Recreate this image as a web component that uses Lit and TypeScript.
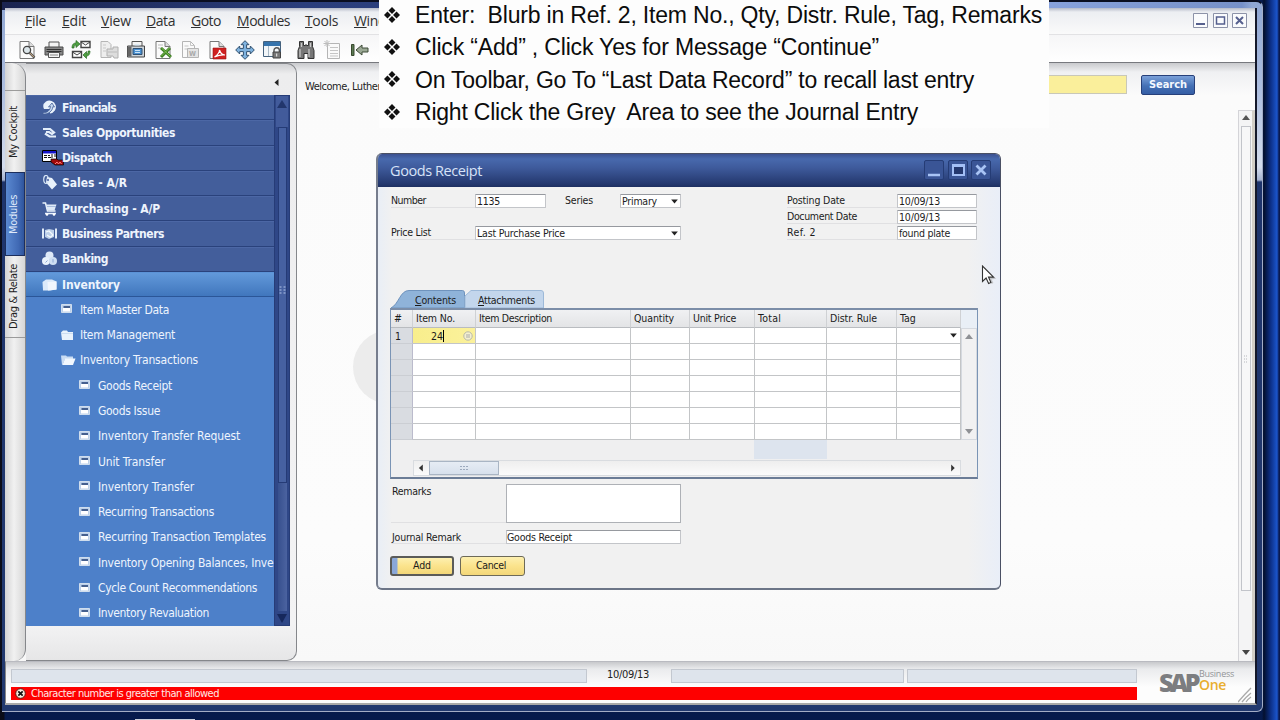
import { LitElement, html, css, svg, nothing } from "lit";
import { customElement, property } from "lit/decorators.js";

/** A run of text whose tracking is adjusted to a given total width. */
@customElement("fit-text")
class FitText extends LitElement {
  @property({ type: Number }) w = 0;
  @property() text = "";
  @property({ type: Boolean }) key = false;

  static styles = css`
    :host { display: inline-block; white-space: pre; flex: none; }
    .mnemonic { text-decoration: underline; text-underline-offset: 1px; text-decoration-thickness: 1px; }
  `;

  updated() {
    this.style.letterSpacing = "0px";
    const box = this.getBoundingClientRect();
    const natural = Math.max(box.width, box.height);
    this.style.letterSpacing = (this.w - natural) / this.text.length + "px";
  }

  render() {
    return this.key
      ? html`<span class="mnemonic">${this.text[0]}</span>${this.text.slice(1)}`
      : html`${this.text}`;
  }
}

const t = (text: string, w: number, key = false) =>
  html`<fit-text .text=${text} .w=${w} .key=${key}></fit-text>`;

const page = svg`<path d="M3 1.500h9l5 5v12H3z" fill="#fbfbfb" stroke="#777" /><path d="M12 1.500v5h5" fill="#ddd" stroke="#777"/>`;
const printer = (body: string, paper: string) => svg`
  <path d="M5 7V2h10v5" fill="${paper}" stroke="#555"/>
  <path d="M1 7h18v8H1z" fill="${body}" stroke="#4a4a4a"/>
  <path d="M2.500 9.500h15M2.500 11.500h15" stroke="#333"/>
  <path d="M4.500 12.500h11v5h-11z" fill="#f4f4f4" stroke="#555"/>
  <path d="M6 15h8" stroke="#888"/>`;

const toolIcons = [
  svg`${page}<circle cx="10" cy="10" r="3.600" fill="#dce6ea" stroke="#444" stroke-width="1.300"/><path d="M12.500 12.700l5 5" stroke="#555" stroke-width="2.500"/><path d="M12.800 13l4 4" stroke="#d8b080"/>`,
  printer("#888", "#f4f4f4"),
  svg`<path d="M10 1.500h9v6h-9z" fill="#fff" stroke="#444" stroke-width="1.400"/><path d="M10 2l4.500 3L19 2" fill="none" stroke="#444"/>
      <path d="M1.500 11.500h9v6h-9z" fill="#fff" stroke="#444" stroke-width="1.400"/><path d="M1.500 12l4.500 3 4.500-3" fill="none" stroke="#444"/>
      <path d="M1 8c0-4 2-5 4-5V0.500L9 4 5 7.500V5C3.500 5 3 6 3 8z" fill="#4fa043" stroke="#2c6b25" stroke-width=".7"/>
      <path d="M19 11c0 4-2 5-3.500 5v2.500L12 15l3.500-3.500V14c1.200 0 1.600-1 1.600-3z" fill="#4fa043" stroke="#2c6b25" stroke-width=".7"/>`,
  svg`<path d="M2 1.500h7l3 3v13H2z" fill="#eee" stroke="#b5b5b5"/><path d="M4 5h3M4 8h3M4 11h3" stroke="#c8c8c8"/><path d="M8 9h6v-2h5v11h-4l-1-2H8z" fill="#ddd" stroke="#b0b0b0"/><path d="M9 12h9" stroke="#bbb"/>`,
  svg`<path d="M6 6V1.500h10V6" fill="#f4f4f4" stroke="#555"/><path d="M1.500 6h17v11h-17z" fill="#cfd5da" stroke="#444"/><path d="M1.500 6.500h4v10h-4z" fill="#666"/><path d="M7 8.500h9v6H7z" fill="#4a90d0" stroke="#2f4f70"/><path d="M8.500 5h5M9 10.500h5M9 12.500h5" stroke="#c9e2f5"/>`,
  svg`${page}<path d="M5 5h5M5 8h4" stroke="#bbb"/><path d="M8 8l10 9M17 8l-9 9" stroke="#3c7d23" stroke-width="3"/><path d="M8.500 8l9 8.500M16.500 8l-8 8" stroke="#80c552"/>`,
  svg`<path d="M2.500 1.500h8l4 4v12h-12z" fill="#fafafa" stroke="#b5b5b5"/><path d="M10.500 1.500v4h4M4.500 6h4M4.500 9h3" fill="none" stroke="#c5c5c5"/><path d="M7.500 8.500h11v9h-11z" fill="#e4e4e4" stroke="#b5b5b5"/><text x="9" y="16" font-size="7" font-weight="700" fill="#aaa">W</text>`,
  svg`${page}<path d="M6 8h13v11H6z" fill="#cf2020" stroke="#9b1010" stroke-width=".6"/><path d="M7.500 17c3-2 5-5 5-7 1 3 3 5 5.500 5-4-.5-7 .5-10.500 2z" fill="none" stroke="#fff" stroke-width="1.200"/>`,
  svg`<path d="M10 0.700l4 4h-2.400v3.700h3.700V6l4 4-4 4v-2.400h-3.700v3.700H14l-4 4-4-4h2.400v-3.700H4.700V14l-4-4 4-4v2.400h3.700V4.700H6z" fill="#7fb2de" stroke="#31506f"/>`,
  svg`<path d="M1.500 1.500h17v15h-17z" fill="#f2f6f9" stroke="#45627e"/><path d="M2 2h16v4H2z" fill="#3674ad"/><path d="M6.500 6v10" stroke="#a8b8c5"/><path d="M12 12v-1.500a2.700 2.700 0 0 1 5.400 0V12" fill="none" stroke="#555" stroke-width="1.400"/><path d="M11 12h7.500v6H11z" fill="#777" stroke="#444"/><path d="M14.700 13.500v3" stroke="#eee"/>`,
];
const toolIcons2 = [
  svg`<path d="M3.500 1.500h4v4h1.500V5h2v.5h1.500v-4h4v5l1.500 4v8h-6v-5h-4v5H2v-8l1.500-4z" fill="#777" stroke="#333"/><path d="M4 9v8M13 9v8M5.500 3v4M14.500 3v4" stroke="#ccc" stroke-width="1.200"/>`,
  svg`<path d="M4.500 3.500h12v15h-12z" fill="#fafafa" stroke="#b5b5b5"/><path d="M7 7.500h8M7 10.500h8M7 13.500h8M7 16h8" stroke="#c5c5c5"/><path d="M4 0v7M0.500 3.500h7M1.500 1l5 5M6.500 1l-5 5" stroke="#bdbdbd"/>`,
  svg`<path d="M1.500 4.500h2.500v11H1.500z" fill="#5a7a52" stroke="#39482f"/><path d="M18 8v4h-6v3l-6-5 6-5v3z" fill="#9aa894" stroke="#3f4c38"/>`,
];

const moduleIcons = [
  svg`<path d="M4 1.500a6.500 6.500 0 1 1 4 12L8 9H2A6 6 0 0 1 4 1.500z" fill="#e8f1fb"/><path d="M1 12.500c4 .5 7-2 7.500-6l-2 .5L10 3l2.500 4-1.600-.3C10.500 11 6.500 14.500 1 14z" fill="#c4d7ee" stroke="#445e98" stroke-width=".8"/>`,
  svg`<path d="M1 4h7l4 3.500-2 1.500-3-2H4" fill="none" stroke="#e4eefa" stroke-width="2.200"/><path d="M14 11.500H7.500L3 8.500" fill="none" stroke="#e4eefa" stroke-width="2.200"/>`,
  svg`<path d="M0.500 0.500h14v11H.5z" fill="#fff" stroke="#000"/><path d="M1 1h13v2.500H1z" fill="#1414c8"/><path d="M2 5.500h3M2 7.500h3M6 5.500h2M6 7.500h3M10 4v4M13 4v3" stroke="#111"/><path d="M9 9h6l1 1h5.500v5H13L9 12z" fill="#a00a0a" stroke="#000" stroke-width=".7"/><path d="M13 14l2-2 1.500 2 1.500-2 1.500 2" fill="none" stroke="#f77"/>`,
  svg`<path d="M5 2l5 1 5 6.500-5 5-6-7z" fill="#e9f2fc"/><ellipse cx="4" cy="4.500" rx="2.300" ry="4" fill="none" stroke="#d8e6f6" stroke-width="1.200"/><circle cx="6" cy="5" r="1" fill="#4a60a0"/>`,
  svg`<path d="M0.500 2h3l2 8h8" fill="none" stroke="#e9f2fc" stroke-width="1.500"/><path d="M4 3.500h10.500l-2 6H5.500z" fill="#dfeaf8"/><path d="M5 5.500h9" stroke="#8fa8d2" stroke-width=".7"/><path d="M3 12.500h11" stroke="#e9f2fc" stroke-width="1.500"/><circle cx="5" cy="13.500" r="1.300" fill="#fff"/><circle cx="12" cy="13.500" r="1.300" fill="#fff"/>`,
  svg`<path d="M1 2.500v10M14 2.500v10" stroke="#dfeaf8" stroke-width="2"/><path d="M3 4l4-1 5 1v7l-5 2-4-2z" fill="#bccfe9"/><path d="M4 6l3-1 4 4-3 2.500M5 9l3 2" fill="none" stroke="#f3f8fd" stroke-width="1.200"/>`,
  svg`<circle cx="7.500" cy="4.500" r="4" fill="#dfeaf8"/><circle cx="4" cy="10" r="4" fill="#e9f2fc"/><circle cx="11" cy="10" r="4" fill="#cfdff3"/><path d="M3.500 11.500l2-2M11 8v3.500" stroke="#8ea9d4"/>`,
  svg`<path d="M.5 5L4 2.500h6l4.500 2v8L8 13.500H1z" fill="#dbeafa"/><path d="M5.500 5l9-.5v8L6 13.500z" fill="#f0f6fd"/>`,
];
const modules: [string, number][] = [
  ["Financials", 54], ["Sales Opportunities", 113], ["Dispatch", 50], ["Sales - A/R", 65],
  ["Purchasing - A/P", 98], ["Business Partners", 102], ["Banking", 46], ["Inventory", 58],
];

const formIcon = svg`<path d="M.5.5h10v8H.5z" fill="#bcd0ea" stroke="#cfdded"/><path d="M2 4h7v3.500H2z" fill="#fff"/><path d="M2.500 2h6.500v2H2.500z" fill="#45608f"/>`;
const folder = svg`<path d="M0 2.500L2 .5h4l1 1.500h5V10H1z" fill="#e9f2fc"/><path d="M0 3.500h12" stroke="#b9cfea" stroke-width=".6"/>`;
const openFolder = svg`<path d="M0 .5h5l1 1h6V4H4L1.500 10H1z" fill="#c9dcf3"/><path d="M4 3.500h10.500L12 10H1.500z" fill="#f1f7fe"/>`;
const children: [string, number, number, unknown][] = [
  ["Item Master Data", 89, 0, formIcon], ["Item Management", 95, 0, folder],
  ["Inventory Transactions", 118, 0, openFolder],
  ["Goods Receipt", 74, 1, formIcon], ["Goods Issue", 62, 1, formIcon],
  ["Inventory Transfer Request", 142, 1, formIcon], ["Unit Transfer", 67, 1, formIcon],
  ["Inventory Transfer", 96, 1, formIcon], ["Recurring Transactions", 116, 1, formIcon],
  ["Recurring Transaction Templates", 168, 1, formIcon],
  ["Inventory Opening Balances, Inven", 182, 1, formIcon],
  ["Cycle Count Recommendations", 159, 1, formIcon], ["Inventory Revaluation", 111, 1, formIcon],
];

@customElement("module-tree")
class ModuleTree extends LitElement {
  static styles = css`
    :host { display: grid; grid-template-columns: 248px 16px; height: 531px; color: #eef4fd;
      font: 12px "DejaVu Sans Condensed", "DejaVu Sans", sans-serif; font-stretch: condensed; }
    .rows { display: grid; grid-template-rows: repeat(21, 1fr); background: #4d80c9; overflow: hidden; }
    .row { display: flex; align-items: center; min-height: 0; overflow: hidden; box-sizing: border-box; }
    .module { padding-left: 16px; font-weight: 700; font-size: 12px; background: #435e9b; border-bottom: 1px solid #2a427c; border-top: 1px solid #4c67a5; }
    .open { background: linear-gradient(#6299da, #4076bd); border-color: #5b92d6 #5b92d6 #2b5698; }
    .module svg { width: 22px; height: 16px; margin-right: -2px; flex: none; }
    .child svg { width: 15px; height: 11px; flex: none; }
    .child { padding-left: 35px; gap: 4px; }
    .deep { padding-left: 53px; }
    .bar { background: #2f4787; border: 1px solid #263c77; box-sizing: border-box; display: flex; flex-direction: column; align-items: center; justify-content: space-between; }
    .bar svg { width: 14px; display: block; }
    .thumb { width: 9px; height: 356px; flex: none; box-sizing: border-box; border: 1px solid #253b76; background: #4661a1; display: flex; align-items: center; justify-content: center; }
    .thumb svg { width: 9px; height: 10px; flex: none; margin-top: -30px; }
    .track { background: linear-gradient(90deg, #37508e, #4b63a0); width: 9px; flex: 1; }
    .cap { width: 12px; height: 31px; background: #425b9b; flex: none; }
    .cap svg { padding-top: 3px; width: 12px; }
    .end { display: flex; align-items: end; height: 14px; }
  `;
  render() {
    return html`
      <div class="rows">
        ${modules.map(([name, w], i) => html`<div class="row module ${i === 7 ? "open" : ""}">
          <svg viewBox="0 0 22 16">${moduleIcons[i]}</svg>${t(name, w)}</div>`)}
        ${children.map(([name, w, deep, icon]) => html`<div class="row child ${deep ? "deep" : ""}">
          <svg viewBox="0 0 15 11">${icon}</svg>${t(name, w)}</div>`)}
      </div>
      <div class="bar">
        <div class="cap"><svg viewBox="0 0 12 10"><path d="M6 1l5 8H1z" fill="#22366c"/></svg></div>
        <div class="thumb"><svg viewBox="0 0 9 10"><path d="M1.500 2h2M5.500 2h2M1.500 5h2M5.500 5h2M1.500 8h2M5.500 8h2" stroke="#b5c6ea"/></svg></div>
        <div class="track"></div>
        <div class="end"><svg viewBox="0 0 14 12"><path d="M2 1h10l-5 9z" fill="#16285c"/></svg></div>
      </div>`;
  }
}

const columns: [string, number][] = [
  ["#", 7], ["Item No.", 39], ["Item Description", 73], ["Quantity", 40],
  ["Unit Price", 43], ["Total", 23], ["Distr. Rule", 47], ["Tag", 17],
];
const arrow = html`<svg class="drop" viewBox="0 0 8 6"><path d="M0 .5h8l-4 5z" fill="#222"/></svg>`;
const up = (c: string) => html`<svg class="tri" viewBox="0 0 10 8"><path d="M1 7L5 2l4 5z" fill="${c}"/></svg>`;
const down = (c: string) => html`<svg class="tri" viewBox="0 0 10 8"><path d="M1 1l4 5 4-5z" fill="${c}"/></svg>`;

@customElement("goods-receipt")
class GoodsReceipt extends LitElement {
  static styles = css`
    :host { display: flex; flex-direction: column; box-sizing: border-box; width: 624px; height: 437px;
      border: 1px solid #4a5064; border-left: 2px solid #767d8d; border-bottom-width: 2px; border-bottom-color: #6c7587; border-radius: 6px; overflow: hidden; color: #1c1c1c;
      background: linear-gradient(90deg, #e9eef6, #f1f1f1 14px, #f1f1f1 590px, #e9eef8);
      font: 10.500px/14px "DejaVu Sans Condensed", "DejaVu Sans", sans-serif; font-stretch: condensed; }
    .title { display: flex; align-items: center; height: 33px; flex: none; box-sizing: border-box; padding: 2px 9px 0 12px; gap: 3.500px;
      background: linear-gradient(#3c5190, #4869ad 5px, #3e5a9b 14px, #24386e 30px, #1d2f60); color: #d7e3f8; font: 14.500px "Open Sans", sans-serif; }
    .title fit-text { margin: -2px auto 0 0; }
    .ctl { width: 20px; height: 20px; border: 1px solid #253c75; background: #3a5596; box-sizing: border-box; border-radius: 2px; margin-top: -3px; }
    .ctl svg { width: 18px; height: 18px; display: block; }
    .body { padding: 6px 0 0 13px; }
    .form { display: grid; grid-template-columns: 84px 71px 19px 55px 61px 106px 110px 80px; grid-template-rows: 16px 16px 15px; height: 97px; box-sizing: border-box; align-content: start; }
    .label { border-bottom: 1px solid #e0e0e2; height: 14px; box-sizing: border-box; margin-top: 1px; line-height: 13px; }
    .field { box-sizing: border-box; height: 14px; margin-top: 1px; line-height: 12px; background: #fff; border: 1px solid #c3c5c9; border-top-color: #96999f; border-radius: 1px; padding-left: 1px; display: flex; align-items: center; justify-content: space-between; padding-right: 1px; }
    .drop { width: 7px; height: 5px; margin-right: 1px; flex: none; }
    .c1 { grid-column: 1; } .c2 { grid-column: 2; } .c4 { grid-column: 4; } .c5 { grid-column: 5; } .c7 { grid-column: 7; } .c8 { grid-column: 8; }
    .r1 { grid-row: 1; } .r2 { grid-row: 2; } .r3 { grid-row: 3; } .wide { grid-column: 2 / 6; }
    .tabs { display: block; width: 160px; height: 18px; }
    .tabrow { display: grid; height: 18px; }
    .tabrow > * { grid-area: 1 / 1; }
    .names { display: flex; gap: 22px; padding: 3px 0 0 24px; }
    .table { width: 588px; height: 171px; box-sizing: border-box; border: 1px solid #7a94b5; border-top: 2px solid #7c8ea8; border-bottom: 2px solid #6b7c96; background: #efeff0; display: grid; grid-template-columns: 22px 63px 155px 59px 65px 72px 70px 64px 16px; grid-template-rows: 18px repeat(7, 16px) 19px 18px; margin-left: -1px; }
    .table > * { box-sizing: border-box; }
    .head { background: linear-gradient(#f0f1f3, #e3e4e6); border-right: 1px solid #cfd1d4; border-bottom: 1px solid #b9bcc0; padding-left: 3px; line-height: 17px; }
    .side { background: #e9eff6; grid-column: 9; }
    .num { background: #d9dce1; border-bottom: 1px solid #cbced3; border-right: 1px solid #bbc; padding-left: 4px; line-height: 16px; }
    .cell { background: #fff; border-right: 1px solid #c3c5c7; border-bottom: 1px solid #c3c5c7; display: flex; align-items: center; justify-content: flex-end; padding-right: 2px; }
    .active { background: linear-gradient(90deg, #f8ee8c, #fbf19b); padding-left: 18px; justify-content: space-between; }
    .edit { border-right: 1px solid #000; line-height: 12px; }
    .lens { width: 10px; height: 10px; }
    .vbar { grid-column: 9; grid-row: 2 / 9; background: #f1f1f2; border: 1px solid #d5d9df; display: flex; flex-direction: column; justify-content: space-between; align-items: center; padding: 3px 0; }
    .tri { width: 10px; height: 8px; display: block; }
    .sum { grid-column: 6; grid-row: 9; background: #dde4ee; margin: 0 0 0 -1px; }
    .hbar { grid-column: 2 / 9; grid-row: 10; margin-top: 1px; height: 16px; border: 1px solid #d9dce0; background: linear-gradient(#eee, #fbfbfb); display: flex; align-items: center; }
    .hthumb { width: 70px; height: 14px; box-sizing: border-box; border: 1px solid #a9b5c4; background: linear-gradient(#e6ecf4, #d7e0ec); margin-right: auto; display: flex; justify-content: center; }
    .hthumb svg { width: 10px; height: 12px; }
    .arr { width: 15px; height: 8px; }
    .notes { display: grid; grid-template-columns: 115px 175px; grid-template-rows: 39px 7px 14px; padding-top: 5px; }
    .notes .label { margin: 0; height: 100%; padding-left: 1px; line-height: 14px; }
    .notes .box { background: #fff; border: 1px solid #aeb1b6; box-sizing: border-box; }
    .notes .field { margin: 0; padding-left: 0; }
    .notes .low { grid-row: 3; }
    .actions { display: flex; gap: 6px; padding-top: 12px; margin-left: -1px; }
    .btn { width: 65px; height: 20px; box-sizing: border-box; border: 1px solid #6d6a58; border-radius: 3px; background: linear-gradient(#fdf0b0, #fbe38c 50%, #f3d779); text-align: center; line-height: 17px; padding-right: 3px; }
    .primary { width: 64px; border: 2px solid #5b5b58; padding-right: 0; line-height: 15px; background: linear-gradient(90deg, #8aa7d8 5px, transparent 6px), linear-gradient(#fdf0b0, #fbe38c 50%, #f3d779); }
  `;
  render() {
    const cells = [1, 2, 3, 4, 5, 6, 7].map((r) => html`
      <div class="num">${r === 1 ? t("1", 6) : nothing}</div>
      ${[1, 2, 3, 4, 5, 6, 7].map((c) => r === 1 && c === 1
        ? html`<div class="cell active"><span class="edit">${t("24", 12)}</span><svg class="lens" viewBox="0 0 10 10"><circle cx="5" cy="5" r="4.200" fill="#f4f0d0" stroke="#b8b8a8"/><path d="M3 4h4M3 6h4" stroke="#aaa"/></svg></div>`
        : html`<div class="cell">${r === 1 && c === 7 ? arrow : nothing}</div>`)}`);
    return html`
      <div class="title">${t("Goods Receipt", 92)}
        <div class="ctl"><svg viewBox="0 0 18 18"><path d="M3 14h12" stroke="#a9c4f5" stroke-width="2.500"/></svg></div>
        <div class="ctl"><svg viewBox="0 0 18 18"><path d="M4 4h11v10H4z" fill="#24386f" stroke="#a3bff5" stroke-width="2"/><path d="M3 4.500h13" stroke="#a3bff5" stroke-width="3"/></svg></div>
        <div class="ctl"><svg viewBox="0 0 18 18"><path d="M4.500 4.500l9 9M13.500 4.500l-9 9" stroke="#a9c4f5" stroke-width="2.800"/></svg></div>
      </div>
      <div class="body">
        <div class="form">
          <div class="label c1 r1">${t("Number", 35)}</div><div class="field c2 r1">${t("1135", 23)}</div>
          <div class="c4 r1">${t("Series", 28)}</div><div class="field c5 r1">${t("Primary", 35)}${arrow}</div>
          <div class="label c1 r3">${t("Price List", 40)}</div><div class="field wide r3">${t("Last Purchase Price", 88)}${arrow}</div>
          <div class="label c7 r1">${t("Posting Date", 58)}</div><div class="field c8 r1">${t("10/09/13", 41)}</div>
          <div class="label c7 r2">${t("Document Date", 70)}</div><div class="field c8 r2">${t("10/09/13", 41)}</div>
          <div class="label c7 r3">${t("Ref. 2", 29)}</div><div class="field c8 r3">${t("found plate", 51)}</div>
        </div>
        <div class="tabrow">
          <svg class="tabs" viewBox="0 0 160 18">
            <path d="M0 18C8 14 9 .5 18 .5H71.500Q73.500.5 73.500 3V18z" fill="#8fb3d9" stroke="#6f93bd"/>
            <path d="M74 18V6L80 .5H150Q152.500.5 152.500 3V18z" fill="#c3d6ec" stroke="#9db9d8"/>
          </svg>
          <div class="names">${t("Contents", 41, true)}${t("Attachments", 57, true)}</div>
        </div>
        <div class="table">
          ${columns.map(([name, w]) => html`<div class="head">${t(name, w)}</div>`)}
          <div class="side"></div>
          ${cells}
          <div class="vbar">${up("#8f9195")}${down("#8f9195")}</div>
          <div class="sum"></div>
          <div class="hbar">
            <svg class="arr" viewBox="0 0 15 9"><path d="M9 .5v8l-4.500-4z" fill="#333"/></svg>
            <div class="hthumb"><svg viewBox="0 0 10 12"><path d="M1 4.500h8M1 7.500h8" stroke="#9daabd" stroke-dasharray="2 1"/></svg></div>
            <svg class="arr" viewBox="0 0 15 9"><path d="M6 .5v8l4-4z" fill="#333"/></svg>
          </div>
        </div>
        <div class="notes">
          <div class="label">${t("Remarks", 39)}</div><div class="box"></div>
          <div class="label low">${t("Journal Remark", 69)}</div><div class="field low">${t("Goods Receipt", 65)}</div>
        </div>
        <div class="actions"><div class="btn primary">${t("Add", 18)}</div><div class="btn">${t("Cancel", 30)}</div></div>
      </div>`;
  }
}

const menu: [string, number][] = [["File", 21], ["Edit", 24], ["View", 30], ["Data", 29], ["Goto", 30], ["Modules", 53], ["Tools", 33], ["Window", 51]];
const steps: [string, number][] = [
  ["Enter:  Blurb in Ref. 2, Item No., Qty, Distr. Rule, Tag, Remarks", 627],
  ["Click “Add” , Click Yes for Message “Continue”", 464],
  ["On Toolbar, Go To “Last Data Record” to recall last entry", 559],
  ["Right Click the Grey  Area to see the Journal Entry", 503],
];

@customElement("app-root")
class AppRoot extends LitElement {
  static styles = css`
    :host { display: block; position: relative; width: 1280px; height: 720px; overflow: hidden; color: #222;
      background: linear-gradient(90deg, #0a0c18 4px, #061a4c 5px 1262px, #04102e 1264px, #0b2c80 1270px, #1b55cc 1277px, #0a1a50 1279px);
      font: 11px/14px "DejaVu Sans Condensed", "DejaVu Sans", sans-serif; font-stretch: condensed; }
    .frame { box-sizing: border-box; width: 1261px; height: 712px; margin-left: 2px; padding: 6px 5px 8px 3px; border-radius: 0 7px 6px 0; border: 1px solid #a3adc6; border-left: 0; border-top: 2px solid #0a0e20;
      background: linear-gradient(90deg, #1a2450, #2b3e7c 300px, #304684 850px, #88a2dc 1040px, #7690c8 1240px, transparent 1250px) 0 0 / 100% 8px no-repeat, linear-gradient(#8fa6d3, #aebfe0 90px, #d4dced 165px, #a5b2d0 178px, #1e346c 180px, #22396f); }
    .client { height: 697px; box-sizing: border-box; border-right: 2px solid #14182a; border-bottom: 2px solid #aaa; background: #e9eaec; display: flex; flex-direction: column; }
    .menu { height: 27px; background: linear-gradient(#b6bac8, #eceef2 4px, #fafafa); border-bottom: 1px solid #e2e2e4; box-sizing: border-box; display: grid; grid-template-columns: 37px 39px 45px 45px 46px 68px 49px 60px auto; padding: 4px 8px 0 20px; font: 14px/18px "Open Sans", sans-serif; color: #303030; }
    .wins { display: flex; gap: 4.500px; justify-content: flex-end; padding: 1px 0 0; }
    .wins svg { width: 15px; height: 15px; display: block; }
    .tools { height: 28px; flex: none; background: linear-gradient(#f6f6f7, #fff); border-bottom: 1px solid #77797e; box-sizing: border-box; padding: 5px 0 0 12px; display: flex; gap: 7.200px; }
    .tools svg { width: 20px; height: 20px; flex: none; }
    .gap { width: 0; }
    .main { display: flex; height: 598px; flex: none; background: linear-gradient(#c9cacd, #eff0f2 9px, #fbfbfb 32px, #fcfcfc 480px, #f8f8f8); }
    .rail { width: 21px; box-sizing: border-box; border-right: 1px solid #85878b; border-radius: 0 14px 12px 0; background: linear-gradient(90deg, #d3d3d4, #f1f1f1 45%, #d6d6d6); padding-top: 27px; }
    .tab { box-sizing: border-box; height: 82px; border-top: 1px solid #9b9b9b; display: flex; align-items: center; justify-content: center; font-size: 11px; padding-right: 2px; }
    .tab fit-text { writing-mode: vertical-rl; transform: rotate(180deg); }
    .sel { height: 84px; background: linear-gradient(90deg, #5a88d0, #4069b4 70%, #2e549c); border: 1px solid #1c2e5c; color: #dfe9fa; }
    .last { border-bottom: 1px solid #9b9b9b; border-top: 0; }
    .panel { width: 271px; box-sizing: border-box; border: 1px solid #85878b; border-left: 0; border-radius: 0 10px 10px 0; background: linear-gradient(#cfd0d3, #ededee 10px, #f3f3f4 560px, #e6e6e7); }
    .pin { height: 31px; display: flex; justify-content: flex-end; align-items: center; padding-right: 17px; box-sizing: border-box; padding-top: 6px; }
    .pin svg { width: 5px; height: 7px; }
    .work { flex: 1; display: grid; grid-template-columns: 1fr 17px; grid-template-rows: 47px 1fr; }
    .top { grid-column: 1 / 3; display: flex; align-items: center; padding: 0 60px 4px 8px; }
    .top .query { margin-left: auto; width: 130px; height: 19px; box-sizing: border-box; border: 1px solid #c9c8b8; background: #faef9b; }
    .top > fit-text { margin-top: 4px; }
    .search { width: 54px; height: 20px; margin-left: 14px; box-sizing: border-box; border: 1px solid #27407a; border-radius: 2px; background: linear-gradient(#7ba1d9, #4470b5 55%, #355ea5); color: #f4f8ff; font-weight: 700; text-align: center; line-height: 18px; }
    .space { overflow: hidden; }
    .disc { width: 74px; height: 74px; border-radius: 50%; background: #ececec; margin: 220px 0 0 56px; }
    .vscroll { border-left: 1px solid #d4d4d8; border-top: 1px solid #d4d4d8; border-right: 3px solid #d2cec6; background: #f4f4f5; display: flex; flex-direction: column; align-items: center; box-sizing: border-box; padding: 2px 0 4px 1px; justify-content: space-between; }
    .tri { width: 10px; height: 8px; display: block; flex: none; }
    .vthumb { width: 10px; margin: 5px 0 auto 0; height: 465px; box-sizing: border-box; border: 1px solid #c2c4ca; background: #f7f7f8; display: flex; align-items: center; justify-content: center; }
    .status { flex: 1; box-sizing: border-box; background: linear-gradient(#c8c9cc, #eaebed 7px, #fdfdfd 25px); border-top: 1px solid #b9bac0; border-left: 1px solid #888; display: grid; grid-template-columns: 1126px 1fr; padding: 7px 3px 0 5px; }
    .slots { display: grid; grid-template-columns: 576px 84px 233px 3px 230px; height: 14px; }
    .slot { background: #dee4ec; border: 1px solid #c3c8d0; box-sizing: border-box; }
    .date { text-align: center; line-height: 11px; padding-right: 2px; }
    .error { background: #fe0000; height: 13px; margin-top: 4px; color: #ffe9e6; display: flex; align-items: center; gap: 5px; padding-left: 4px; box-sizing: border-box; }
    .error svg { width: 11px; height: 11px; }
    .brand { display: flex; padding-left: 22px; align-items: flex-start; font: 9px "Open Sans", sans-serif; }
    .sap { font: 800 25px/26px "Open Sans", sans-serif; color: #7c7d80; }
    .one { display: flex; flex-direction: column; color: #929497; font-size: 9px; line-height: 8px; padding: 1px 0 0 2px; }
    .gold { color: #e9ae2e; font-weight: 600; font-size: 14px; line-height: 14px; }
    .grip { width: 14px; height: 16px; margin-left: auto; align-self: flex-end; }
    .slide { position: absolute; left: 379px; top: 0; width: 670px; height: 128px; box-sizing: border-box; background: #fdfdfd; color: #0c0c0c; font: 23px/32px "Liberation Sans", sans-serif; display: grid; grid-template-rows: repeat(4, 32.300px); align-content: start; padding: 0 0 0 5px; }
    .step { display: flex; gap: 15px; align-items: center; }
    .step svg { width: 16px; height: 16px; flex: none; margin-top: -3px; }
    .step fit-text { margin-top: -2px; }
    goods-receipt { position: absolute; left: 376px; top: 153px; width: 625px; }
    .cursor { position: absolute; left: 981px; top: 265px; width: 16px; height: 21px; }
    .taskbar { position: absolute; left: 135px; top: 719px; width: 60px; height: 1px; background: #c9ced9; }
  `;
  render() {
    return html`
      <div class="frame"><div class="client">
        <div class="menu">${menu.map(([n, w]) => html`<span>${t(n, w, true)}</span>`)}
          <div class="wins">
            <svg viewBox="0 0 15 15"><path d="M.5.5h14v14H.5z" fill="#fafbfd" stroke="#8c92a8"/><path d="M3 11h9" stroke="#56608e" stroke-width="2"/></svg>
            <svg viewBox="0 0 15 15"><path d="M.5.5h14v14H.5z" fill="#fafbfd" stroke="#8c92a8"/><path d="M3.500 4h8v7h-8zM3 4h9" fill="none" stroke="#56608e" stroke-width="1.500"/></svg>
            <svg viewBox="0 0 15 15"><path d="M.5.5h14v14H.5z" fill="#fafbfd" stroke="#8c92a8"/><path d="M4 4l7 7M11 4l-7 7" stroke="#56608e" stroke-width="2"/></svg>
          </div>
        </div>
        <div class="tools">
          ${toolIcons.map((i) => html`<svg viewBox="0 0 20 20">${i}</svg>`)}
          <span class="gap"></span>
          ${toolIcons2.map((i) => html`<svg viewBox="0 0 20 20">${i}</svg>`)}
        </div>
        <div class="main">
          <div class="rail">
            <div class="tab">${t("My Cockpit", 52)}</div>
            <div class="tab sel">${t("Modules", 39)}</div>
            <div class="tab last">${t("Drag & Relate", 65)}</div>
          </div>
          <div class="panel">
            <div class="pin"><svg viewBox="0 0 5 7"><path d="M4.500 0v7L.5 3.500z" fill="#222"/></svg></div>
            <module-tree></module-tree>
          </div>
          <div class="work">
            <div class="top">${t("Welcome, Luther", 76)}<div class="query"></div><div class="search">${t("Search", 38)}</div></div>
            <div class="space"><div class="disc"></div></div>
            <div class="vscroll">${up("#555")}<div class="vthumb"><svg class="tri" viewBox="0 0 10 8"><path d="M3 1h4M3 4h4M3 7h4" stroke="#b5b7bd" stroke-dasharray="1 1"/></svg></div>${down("#444")}</div>
          </div>
        </div>
        <div class="status">
          <div>
            <div class="slots"><div class="slot"></div><div class="date">${t("10/09/13", 42)}</div><div class="slot"></div><div></div><div class="slot"></div></div>
            <div class="error"><svg viewBox="0 0 11 11"><circle cx="5.500" cy="5.500" r="4.800" fill="#fbeee0" stroke="#5c1a10"/><path d="M3.300 3.300l4.400 4.400M7.700 3.300L3.300 7.700" stroke="#111" stroke-width="1.700"/></svg>${t("Character number is greater than allowed", 188)}</div>
          </div>
          <div class="brand">
            <span class="sap">${t("SAP", 38)}</span>
            <span class="one">${t("Business", 35)}<span class="gold">${t("One", 27)}</span></span>
            <svg class="grip" viewBox="0 0 14 16"><path d="M0 15Q6 8 13 1M4 15Q8 10 13 6M8 15Q10 12 13 10" fill="none" stroke="#aaa" stroke-width="1.300"/></svg>
          </div>
        </div>
      </div></div>
      <div class="slide">${steps.map(([s, w]) => html`<div class="step">
        <svg viewBox="0 0 17 17"><path d="M8.500 0l3.700 3.700-3.700 3.700-3.700-3.700zM8.500 9.600l3.700 3.700-3.700 3.700-3.700-3.700zM3.700 4.800l3.700 3.700-3.700 3.700L0 8.500zM13.300 4.800L17 8.500l-3.700 3.700-3.700-3.700z" fill="#111"/></svg>${t(s, w)}</div>`)}</div>
      <goods-receipt></goods-receipt>
      <svg class="cursor" viewBox="0 0 16 21"><path d="M3 3l10 10-4 .5 2.500 5" fill="none" stroke="#999" stroke-width="2" opacity=".5"/><path d="M1.500 1v15.500l3.600-3.500 2.500 5.500 2.300-1.100-2.400-5.300h5z" fill="#fff" stroke="#333" stroke-width="1.100"/></svg>
      <div class="taskbar"></div>`;
  }
}
